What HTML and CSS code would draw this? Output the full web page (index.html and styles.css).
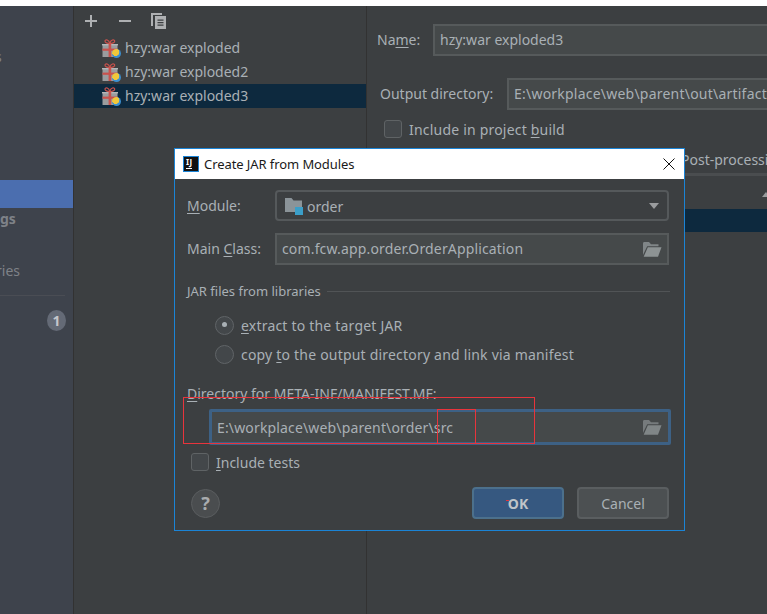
FILE: index.html
```html
<!DOCTYPE html>
<html lang="en">
<head>
<meta charset="utf-8">
<title>Create JAR from Modules</title>
<link rel="stylesheet" href="styles.css">
</head>
<body>
<svg class="defs" width="0" height="0" aria-hidden="true">
  <symbol id="gift" viewBox="0 0 18 18">
    <rect x="0.5" y="5" width="15" height="13" fill="#9a9c9e"/>
    <rect x="0" y="5" width="16" height="1.4" fill="#b4b6b8"/>
    <rect x="6.6" y="5" width="2.6" height="13" fill="#c9524c"/>
    <rect x="0.5" y="9.6" width="15" height="2.2" fill="#c9524c"/>
    <path d="M7.8 4.6C5.4 4.6 2.6 3.6 3 1.900 3.500 0 6.800.6 7.800 4.400 8.800.6 12.100 0 12.700 1.900 13.100 3.600 10.200 4.600 7.800 4.600Z" fill="none" stroke="#c9524c" stroke-width="1.2"/>
  </symbol>
  <symbol id="folder-open" viewBox="0 0 20 17">
    <path d="M1 14V2.500C1 1.700 1.500 1 2.300 1H7L9 3.200H16.500V5.300H5.200L1 14Z" fill="#8b9193"/>
    <path d="M5.800 6.300H19.500L16 15.800H1.700Z" fill="#9aa0a2"/>
  </symbol>
</svg>
<div class="top-strip"></div>
<div class="ide">
  <aside class="sidebar">
    <div class="side-row side-s"><span class="side-text">s</span></div>
    <div class="side-selected"></div>
    <div class="side-row side-gs"><span class="side-text side-bold">gs</span></div>
    <div class="side-row side-ries"><span class="side-text">ries</span></div>
    <div class="side-rule"></div>
    <div class="side-badge-row"><span class="badge">1</span></div>
  </aside>
  <section class="list-panel">
    <div class="toolbar">
      <svg class="tool tool-plus" width="14" height="14" viewBox="0 0 14 14"><path d="M6 1h2v5h5v2H8v5H6V8H1V6h5z" fill="#aeb0b2"/></svg>
      <svg class="tool tool-minus" width="14" height="14" viewBox="0 0 14 14"><path d="M1 6h12v2H1z" fill="#aeb0b2"/></svg>
      <svg class="tool" width="18" height="18" viewBox="0 0 18 18"><path d="M1 1h11v2H3v11H1z" fill="#aeb0b2"/><path d="M5 4h11v13H5z" fill="#aeb0b2"/><path d="M7.500 7.500h6v1.300h-6zM7.500 10h6v1.300h-6zM7.500 12.500h6v1.300h-6z" fill="#3c3f41"/></svg>
    </div>
    <ul class="artifacts">
      <li class="artifact">
        <span class="gift-wrap"><svg class="gift" width="18" height="18"><use href="#gift"/></svg><span class="gift-dot"></span></span>
        <span class="nudge">hzy:war exploded</span>
      </li>
      <li class="artifact">
        <span class="gift-wrap"><svg class="gift" width="18" height="18"><use href="#gift"/></svg><span class="gift-dot"></span></span>
        <span class="nudge">hzy:war exploded2</span>
      </li>
      <li class="artifact artifact-selected">
        <span class="gift-wrap"><svg class="gift" width="18" height="18"><use href="#gift"/></svg><span class="gift-dot"></span></span>
        <span class="nudge">hzy:war exploded3</span>
      </li>
    </ul>
  </section>
  <section class="detail">
    <div class="name-row">
      <label class="lbl nudge">Na<u>m</u>e:</label>
      <div class="field name-field"><span class="nudge">hzy:war exploded3</span></div>
    </div>
    <div class="out-row">
      <label class="lbl nudge">Output directory:</label>
      <div class="field out-field"><span class="nudge">E:\workplace\web\parent\out\artifacts\hzy_war_exploded3</span></div>
    </div>
    <div class="build-row">
      <span class="check"></span>
      <span class="lbl wide">Include in project <u>b</u>uild</span>
    </div>
    <div class="tabs"><span class="tab-text">Post-processing</span></div>
    <div class="table-head"><span class="sort-mark"></span></div>
    <div class="table-row"></div>
  </section>
</div>

<div class="dialog">
  <header class="title-bar">
    <span class="ij-logo"><span class="ij-text">IJ</span><span class="ij-bar"></span></span>
    <span class="title-text">Create JAR from Modules</span>
    <svg class="close" width="12" height="12" viewBox="0 0 12 12"><path d="M.5.500l11 11M11.500.500l-11 11" stroke="#111" stroke-width="1" fill="none"/></svg>
  </header>
  <div class="dialog-body">
    <div class="form-row module-row">
      <label class="lbl form-lbl"><u>M</u>odule:</label>
      <div class="combo">
        <svg class="mod-icon" width="20" height="20" viewBox="0 0 20 20"><path d="M1 16V2h6.500l2 2.500H18v11.500z" fill="#8b9499"/><rect x="11" y="11" width="8" height="8" fill="#3b9fc9"/></svg>
        <span class="order-text">order</span>
        <span class="combo-arrow"></span>
      </div>
    </div>
    <div class="form-row class-row">
      <label class="lbl form-lbl nudge">Main <u>C</u>lass:</label>
      <div class="field class-field">
        <span class="nudge wide-path">com.fcw.app.order.OrderApplication</span>
        <svg class="browse browse-class" width="20" height="17"><use href="#folder-open"/></svg>
      </div>
    </div>
    <div class="group-head">
      <span class="lbl group-text">JAR files from libraries</span>
      <span class="group-line"></span>
    </div>
    <div class="radio-row radio-first">
      <span class="radio radio-on"></span>
      <span class="lbl wide"><u>e</u>xtract to the target JAR</span>
    </div>
    <div class="radio-row radio-second">
      <span class="radio"></span>
      <span class="lbl wide">copy <u>t</u>o the output directory and link via manifest</span>
    </div>
    <div class="lbl dir-lbl"><u>D</u>irectory for META-INF/MANIFEST.MF:</div>
    <div class="focus-ring">
      <div class="field dir-field">
        <span class="wide-path">E:\workplace\web\parent\order\src</span>
        <svg class="browse browse-dir" width="20" height="17"><use href="#folder-open"/></svg>
      </div>
    </div>
    <div class="tests-row">
      <span class="check"></span>
      <span class="lbl"><u>I</u>nclude tests</span>
    </div>
    <div class="foot">
      <span class="help">?</span>
      <span class="btn btn-ok">OK</span>
      <span class="btn btn-cancel">Cancel</span>
    </div>
  </div>
</div>

<div class="mark mark-wide"></div>
<div class="mark mark-narrow"></div>
<div class="mark mark-tick"></div>
</body>
</html>
```
FILE: styles.css
```css
* { box-sizing: border-box; }
html, body { margin: 0; padding: 0; }
body {
  width: 767px;
  height: 614px;
  overflow: hidden;
  background: #fff;
  font-family: "Noto Sans", "Open Sans", sans-serif;
  font-size: 14px;
  color: #a9b0b5;
  position: relative;
}
u { text-underline-offset: 2px; text-decoration-thickness: 1px; }
.defs { position: absolute; }
.nudge { padding-bottom: 2px; }
.wide { letter-spacing: 0.2px; }
.wide-path { letter-spacing: 0.15px; }
.top-strip { height: 6px; background: #fff; }
.ide { display: flex; height: 608px; background: #3c3f41; }

.sidebar {
  width: 74px;
  flex: none;
  background: #3e434c;
  border-right: 1px solid #323232;
  color: #7e8288;
  display: flex;
  flex-direction: column;
}
.side-row { display: flex; height: 20px; align-items: center; }
.side-text { line-height: 20px; }
.side-s { margin-top: 41px; margin-left: -5px; }
.side-selected { height: 28px; margin-top: 113px; background: #4b6eaf; }
.side-gs { margin-top: 1px; }
.side-bold { font-weight: 700; }
.side-ries { margin-top: 32px; margin-left: -4px; }
.side-rule { height: 1px; margin: 14px 8px 0 0; background: #4a4d54; }
.side-badge-row { display: flex; justify-content: flex-end; padding-right: 7px; margin-top: 14px; }
.badge {
  width: 19px;
  height: 21px;
  border-radius: 50%;
  background: #646a76;
  color: #c4c7cc;
  font-weight: 700;
  font-size: 14px;
  line-height: 21px;
  text-align: center;
}

.list-panel { width: 293px; flex: none; border-right: 1px solid #323232; }
.toolbar { display: flex; align-items: center; height: 30px; padding-left: 10px; }
.tool { flex: none; }
.tool-plus { margin-right: 20px; }
.tool-minus { margin-right: 18px; }
.artifacts { list-style: none; margin: 0; padding: 0; }
.artifact { display: flex; align-items: center; height: 24px; padding-left: 28px; color: #a9b0b5; }
.artifact-selected { background: #0d293e; }
.gift-wrap { position: relative; width: 18px; height: 18px; margin-right: 5px; flex: none; }
.gift { display: block; }
.gift-dot {
  position: absolute;
  right: -1px;
  bottom: -1px;
  width: 9px;
  height: 9px;
  border-radius: 50%;
  background: radial-gradient(circle at 40% 35%, #f0c83c 0 45%, #3b8fd0 50%);
}

.detail { flex: 1; min-width: 0; overflow: hidden; white-space: nowrap; }
.lbl { color: #a9b0b5; }
.field {
  background: #45494a;
  border: 2px solid #565a5b;
  color: #a9b0b5;
  display: flex;
  align-items: center;
}
.name-row { display: flex; align-items: center; margin-top: 18px; padding-left: 10px; }
.name-row .lbl { width: 56px; flex: none; }
.name-field { width: 400px; flex: none; height: 32px; padding-left: 5px; }
.out-row { display: flex; align-items: center; margin-top: 22px; padding-left: 13px; }
.out-row .lbl { width: 127px; flex: none; }
.out-field { width: 500px; flex: none; height: 32px; padding-left: 5px; letter-spacing: 0.22px; }
.build-row { display: flex; align-items: center; margin-top: 10px; padding-left: 17px; height: 18px; }
.check {
  display: block;
  width: 18px;
  height: 18px;
  flex: none;
  border: 1.500px solid #5f6365;
  border-radius: 3px;
  background: #43474a;
  margin-right: 7px;
}
.tabs { height: 29px; margin-top: 9px; padding-left: 314px; border-bottom: 3px solid #4a4d4f; line-height: 26px; }
.table-head { height: 33px; background: #3c3f41; position: relative; }
.sort-mark {
  position: absolute;
  right: -3px;
  top: 16px;
  border-left: 4px solid transparent;
  border-right: 4px solid transparent;
  border-bottom: 5px solid #9a9c9e;
}
.table-row { height: 25px; background: #0d293e; margin-top: -2px; }

.dialog {
  position: absolute;
  left: 174px;
  top: 148px;
  width: 511px;
  height: 383px;
  border: 1px solid #1b84d6;
  background: #3c3f41;
  display: flex;
  flex-direction: column;
}
.title-bar {
  height: 30px;
  flex: none;
  background: #fff;
  display: flex;
  align-items: center;
  padding-left: 8px;
  padding-right: 9px;
  color: #1a1a1a;
  font-size: 13px;
}
.ij-logo {
  width: 16px;
  height: 16px;
  flex: none;
  background: #111;
  border: 1px solid #1b84d6;
  margin-right: 5px;
  position: relative;
  display: block;
}
.ij-text {
  position: absolute;
  left: 2px;
  top: 0;
  color: #fff;
  font-size: 8px;
  line-height: 9px;
  font-weight: 700;
  letter-spacing: 0.5px;
}
.ij-bar { position: absolute; left: 2px; bottom: 2px; width: 6px; height: 1px; background: #fff; }
.title-text { flex: 1; letter-spacing: -0.08px; }
.close { flex: none; }
.dialog-body { flex: 1; display: flex; flex-direction: column; padding: 0 15px 0 12px; }
.form-row { display: flex; align-items: center; }
.form-lbl { width: 88px; flex: none; }
.module-row { margin-top: 11px; }
.combo {
  flex: 1;
  height: 31px;
  border: 2px solid #55595b;
  border-radius: 4px;
  display: flex;
  align-items: center;
  padding-left: 7px;
}
.mod-icon { flex: none; margin-right: 3px; }
.order-text { padding-top: 2px; }
.combo-arrow {
  margin-left: auto;
  margin-right: 8px;
  border-left: 5px solid transparent;
  border-right: 5px solid transparent;
  border-top: 6px solid #9a9c9e;
}
.class-row { margin-top: 12px; }
.class-field { flex: 1; height: 32px; padding: 0 5px; }
.browse { flex: none; margin-left: auto; }
.browse-class { opacity: 0.85; }
.browse-dir { opacity: 0.7; }
.group-head { display: flex; align-items: center; margin-top: 17px; height: 18px; }
.group-text { font-size: 13px; }
.group-line { flex: 1; height: 1px; background: #515456; margin-left: 6px; margin-right: -1px; }
.radio-row { display: flex; align-items: center; height: 20px; padding-left: 28px; }
.radio-first { margin-top: 15px; }
.radio-second { margin-top: 9px; }
.radio {
  width: 19px;
  height: 19px;
  flex: none;
  border: 1.500px solid #606467;
  border-radius: 50%;
  background: #43474a;
  margin-right: 7px;
  position: relative;
}
.radio-on::after {
  content: "";
  position: absolute;
  left: 5.500px;
  top: 5.500px;
  width: 5px;
  height: 5px;
  border-radius: 50%;
  background: #a9b0b5;
}
.dir-lbl { margin-top: 20px; line-height: 20px; }
.focus-ring {
  margin: 5px -2px 0 22px;
  height: 36px;
  border: 3px solid #3d6185;
  border-radius: 2px;
}
.dir-field { height: 30px; border: 0; padding: 0 6px 0 5px; }
.tests-row { display: flex; align-items: center; height: 18px; margin-top: 8px; padding-left: 4px; }
.foot { display: flex; align-items: center; margin-top: 16px; padding-left: 4px; }
.help {
  width: 29px;
  height: 29px;
  border-radius: 50%;
  background: #4a4d4f;
  border: 1px solid #5a5d5f;
  color: #a9acae;
  font-weight: 700;
  font-size: 18px;
  line-height: 27px;
  text-align: center;
}
.btn {
  width: 92px;
  height: 32px;
  border-radius: 4px;
  line-height: 29px;
  text-align: center;
  border: 2px solid;
}
.btn-ok {
  margin-left: auto;
  background: #365880;
  border-color: #4c708c;
  color: #c0c4c8;
  font-weight: 700;
}
.btn-cancel {
  margin-left: 13px;
  background: #4c5052;
  border-color: #5a5e60;
  color: #a9b0b5;
}

.mark { position: absolute; border: 1px solid #e8343c; pointer-events: none; }
.mark-wide { left: 183px; top: 397px; width: 352px; height: 47px; }
.mark-narrow { left: 437px; top: 409px; width: 39px; height: 35px; }
.mark-tick { left: 506px; top: 500px; width: 3px; height: 1px; border: 0; background: #e8343c; }
```
